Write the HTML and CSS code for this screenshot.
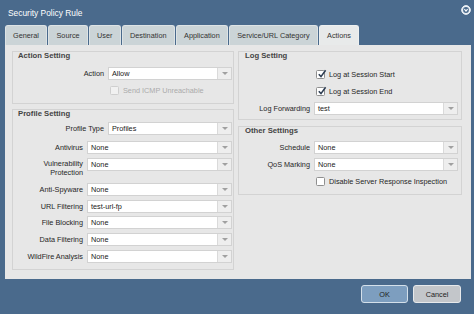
FILE: index.html
```html
<!DOCTYPE html>
<html>
<head>
<meta charset="utf-8">
<link rel="stylesheet" href="styles.css">
</head>
<body>
<div class="window">
  <div class="titlebar">
    <span class="title">Security Policy Rule</span>
    <svg class="help" width="10" height="10" viewBox="0 0 10 10"><circle cx="5" cy="5" r="4.4" fill="#e4ebf2" stroke="#ffffff" stroke-width="0.8"/><circle cx="5" cy="5" r="2.9" fill="#4a6a8c"/><path d="M3.4 4.2 L5 6.2 L6.6 4.2" fill="none" stroke="#ffffff" stroke-width="1.1"/></svg>
  </div>
  <div class="tabs">
    <div class="tab">General</div>
    <div class="tab">Source</div>
    <div class="tab">User</div>
    <div class="tab">Destination</div>
    <div class="tab">Application</div>
    <div class="tab">Service/URL Category</div>
    <div class="tab active">Actions</div>
  </div>
  <div class="panel">
    <div class="col col-left">
      <div class="box box-action">
        <div class="legend">Action Setting</div>
        <div class="row row-first-action">
          <div class="lbl lbl-wide">Action</div>
          <div class="select"><span class="val">Allow</span><span class="arrow"></span></div>
        </div>
        <div class="check-row check-left">
          <span class="cb cb-disabled"></span>
          <span class="cb-text text-disabled">Send ICMP Unreachable</span>
        </div>
      </div>
      <div class="box box-profile">
        <div class="legend">Profile Setting</div>
        <div class="row row-ptype">
          <div class="lbl lbl-wide">Profile Type</div>
          <div class="select"><span class="val">Profiles</span><span class="arrow"></span></div>
        </div>
        <div class="row">
          <div class="lbl lbl-narrow">Antivirus</div>
          <div class="select"><span class="val">None</span><span class="arrow"></span></div>
        </div>
        <div class="row row-tall">
          <div class="lbl lbl-narrow lbl-two">Vulnerability<br>Protection</div>
          <div class="select"><span class="val">None</span><span class="arrow"></span></div>
        </div>
        <div class="row">
          <div class="lbl lbl-narrow">Anti-Spyware</div>
          <div class="select"><span class="val">None</span><span class="arrow"></span></div>
        </div>
        <div class="row">
          <div class="lbl lbl-narrow">URL Filtering</div>
          <div class="select"><span class="val">test-url-fp</span><span class="arrow"></span></div>
        </div>
        <div class="row">
          <div class="lbl lbl-narrow">File Blocking</div>
          <div class="select"><span class="val">None</span><span class="arrow"></span></div>
        </div>
        <div class="row">
          <div class="lbl lbl-narrow">Data Filtering</div>
          <div class="select"><span class="val">None</span><span class="arrow"></span></div>
        </div>
        <div class="row">
          <div class="lbl lbl-narrow">WildFire Analysis</div>
          <div class="select"><span class="val">None</span><span class="arrow"></span></div>
        </div>
      </div>
    </div>
    <div class="col col-right">
      <div class="box box-log">
        <div class="legend">Log Setting</div>
        <div class="check-row check-right check-first">
          <span class="cb"><svg class="tick" viewBox="0 0 10 10"><path d="M1.8 5.2 L4 7.6 L8.6 1.2" fill="none" stroke="#2e3d52" stroke-width="1.6"/></svg></span>
          <span class="cb-text">Log at Session Start</span>
        </div>
        <div class="check-row check-right">
          <span class="cb"><svg class="tick" viewBox="0 0 10 10"><path d="M1.8 5.2 L4 7.6 L8.6 1.2" fill="none" stroke="#2e3d52" stroke-width="1.6"/></svg></span>
          <span class="cb-text">Log at Session End</span>
        </div>
        <div class="row">
          <div class="lbl lbl-right">Log Forwarding</div>
          <div class="select"><span class="val">test</span><span class="arrow"></span></div>
        </div>
      </div>
      <div class="box box-other">
        <div class="legend">Other Settings</div>
        <div class="row row-first-other">
          <div class="lbl lbl-right">Schedule</div>
          <div class="select"><span class="val">None</span><span class="arrow"></span></div>
        </div>
        <div class="row">
          <div class="lbl lbl-right">QoS Marking</div>
          <div class="select"><span class="val">None</span><span class="arrow"></span></div>
        </div>
        <div class="check-row check-right">
          <span class="cb"></span>
          <span class="cb-text">Disable Server Response Inspection</span>
        </div>
      </div>
    </div>
  </div>
  <div class="footer">
    <div class="btn btn-ok">OK</div>
    <div class="btn btn-cancel">Cancel</div>
  </div>
</div>
</body>
</html>
```

FILE: styles.css
```css
html, body {
  margin: 0;
  padding: 0;
}
body {
  background: #4a6a8c;
  font-family: "Liberation Sans", Arial, sans-serif;
  color: #333;
}
.window {
  width: 474px;
  height: 314px;
  display: flex;
  flex-direction: column;
  overflow: hidden;
}
.titlebar {
  height: 25px;
  flex: none;
  display: flex;
  justify-content: space-between;
  align-items: flex-start;
  padding: 0 3px 0 8px;
  box-sizing: border-box;
}
.title {
  color: #ffffff;
  font-size: 8.4px;
  line-height: 10px;
  margin-top: 8px;
}
.help {
  margin-top: 5px;
}
.tabs {
  height: 20px;
  flex: none;
  display: flex;
  gap: 1.5px;
  padding-left: 5px;
}
.tab {
  padding: 0 7px;
  background: #cbd4d7;
  border: 1px solid #dde3e5;
  border-bottom: 0;
  border-radius: 3px 3px 0 0;
  font-size: 7.3px;
  color: #333;
  display: flex;
  align-items: center;
  white-space: nowrap;
}
.tab.active {
  background: #e8eaea;
  border-color: #eef0f0;
}
.panel {
  height: 234px;
  flex: none;
  margin: 0 3px 0 5px;
  background: #e7e7e7;
  display: flex;
  gap: 4px;
  padding: 6px 9px 0 7px;
  box-sizing: border-box;
}
.col {
  display: flex;
  flex-direction: column;
}
.col-left {
  width: 222px;
  gap: 5px;
}
.col-right {
  width: 224px;
  gap: 6px;
}
.box {
  border: 1px solid #d3d3d3;
  display: flex;
  flex-direction: column;
}
.legend {
  font-weight: bold;
  font-size: 7.7px;
  line-height: 8px;
  height: 8px;
  color: #444;
  padding-left: 5px;
  white-space: nowrap;
}
.box-action {
  padding: 0 1px 6px 0;
  gap: 3px;
}
.box-action .legend {
  margin-bottom: 3px;
}
.box-profile {
  padding: 0 1px 6px 0;
  gap: 2.6px;
}
.box-profile .legend {
  margin-bottom: 1.4px;
}
.row-ptype {
  margin-bottom: 1.9px;
}
.box-log {
  padding: 0 3px 4px 0;
  gap: 3px;
}
.box-log .legend {
  padding-left: 6px;
  margin-bottom: 4px;
}
.box-other {
  padding: 0 3px 6px 0;
  gap: 3px;
}
.box-other .legend {
  padding-left: 6px;
  margin-bottom: 2px;
}
.row {
  height: 14px;
  display: flex;
  align-items: center;
}
.row-tall {
  height: 23px;
  align-items: flex-start;
}
.lbl {
  flex: none;
  text-align: right;
  font-size: 7.3px;
  line-height: 9px;
  color: #262626;
  margin-right: 4px;
  white-space: nowrap;
}
.lbl-wide {
  width: 91px;
}
.lbl-narrow {
  width: 70px;
}
.lbl-right {
  width: 71px;
}
.lbl-two {
  padding-top: 2px;
}
.select {
  flex: 1;
  height: 13px;
  box-sizing: border-box;
  border: 1px solid #d2d2d2;
  background: #ffffff;
  display: flex;
}
.row-tall .select {
  margin-top: 0.5px;
}
.val {
  flex: 1;
  font-size: 7.3px;
  line-height: 11px;
  padding-left: 3px;
  color: #222;
}
.arrow {
  width: 13px;
  flex: none;
  background: #eeeeee;
  border-left: 1px solid #dadada;
  display: flex;
  align-items: center;
  justify-content: center;
}
.arrow::after {
  content: "";
  border-left: 3px solid transparent;
  border-right: 3px solid transparent;
  border-top: 3px solid #a0a0a0;
}
.check-row {
  height: 14px;
  display: flex;
  align-items: center;
  gap: 4px;
}
.check-left {
  padding-left: 97px;
}
.check-right {
  padding-left: 77px;
}
.cb {
  width: 9px;
  height: 9px;
  box-sizing: border-box;
  border: 1px solid #8f8f8f;
  border-radius: 1.5px;
  background: #ffffff;
  flex: none;
  position: relative;
}
.cb-disabled {
  border-color: #cfcfcf;
  background: #f1f1f1;
}
.tick {
  position: absolute;
  left: 0;
  top: -2px;
  width: 10px;
  height: 10px;
  overflow: visible;
}
.cb-text {
  font-size: 7.3px;
  line-height: 9px;
  color: #262626;
  white-space: nowrap;
}
.text-disabled {
  color: #ababab;
}
.footer {
  flex: 1;
  display: flex;
  justify-content: flex-end;
  gap: 5px;
  padding: 6px 13px 0 0;
}
.btn {
  height: 18px;
  box-sizing: border-box;
  border-radius: 3px;
  font-size: 7.3px;
  display: flex;
  align-items: center;
  justify-content: center;
  color: #222;
}
.btn-ok {
  width: 47px;
  background: #7d9ebf;
  border: 1.5px solid #d4e0ea;
}
.btn-cancel {
  width: 48px;
  background: #c3c6ca;
  border: 1.5px solid #e7e9eb;
}
```
